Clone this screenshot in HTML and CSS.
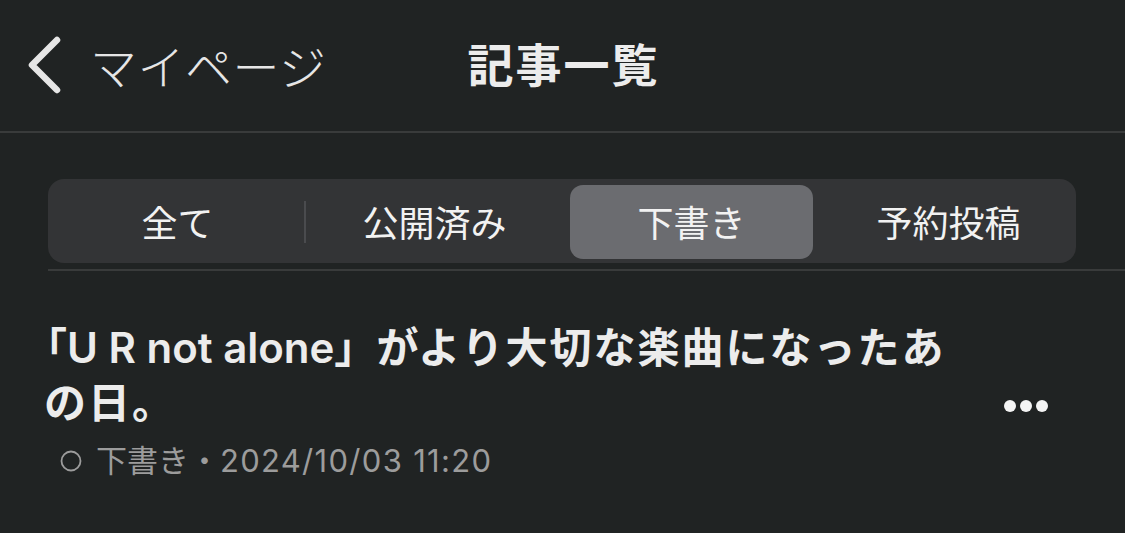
FILE: index.html
```html
<!DOCTYPE html>
<html lang="ja">
<head>
<meta charset="utf-8">
<link rel="stylesheet" href="styles.css">
</head>
<body>
<header class="nav">
  <div class="back">
    <svg class="chev" width="40" height="60" viewBox="0 0 40 60"><path d="M33 5 L8 30 L33 55" fill="none" stroke="#e6e6e6" stroke-width="6.5" stroke-linecap="round" stroke-linejoin="round"/></svg>
    <span class="back-label">マイページ</span>
  </div>
  <h1 class="title">記事一覧</h1>
  <div class="nav-end"></div>
</header>
<div class="seg-wrap">
  <div class="seg">
    <div class="seg-item first"><span class="pill">全て</span></div>
    <div class="seg-item"><span class="pill">公開済み</span></div>
    <div class="seg-item"><span class="pill active">下書き</span></div>
    <div class="seg-item"><span class="pill">予約投稿</span></div>
  </div>
</div>
<div class="rule"></div>
<article class="post">
  <div class="post-body">
    <h2 class="post-title">「U R not alone」<span class="jp">がより大切な楽曲になったあ</span><span class="jp">の日。</span></h2>
    <div class="meta"><svg class="ring" width="22" height="22" viewBox="0 0 22 22"><circle cx="11" cy="11" r="9.5" fill="none" stroke="#9c9c9c" stroke-width="1.8"/></svg><span class="meta-text">下書き・<span class="num">2024/10/03 11:20</span></span></div>
  </div>
  <div class="more"><span></span><span></span><span></span></div>
</article>
</body>
</html>
```
FILE: styles.css
```css
* { box-sizing: border-box; }
html, body { margin: 0; padding: 0; }
body {
  background: #202323;
  color: #ececec;
  font-family: Inter, "Noto Sans CJK JP", sans-serif;
  width: 1125px;
  height: 533px;
  overflow: hidden;
}
.nav {
  height: 133px;
  border-bottom: 2px solid #393b3b;
  display: grid;
  grid-template-columns: 1fr auto 1fr;
  align-items: center;
}
.back { display: flex; align-items: center; gap: 26px; margin-top: -2px; padding-left: 24px; }
.chev { display: block; }
.back-label {
  font-family: "Noto Sans CJK JP", sans-serif;
  font-size: 47px;
  font-weight: 300;
  color: #e6e6e6;
  letter-spacing: 0.5px;
}
.title {
  margin: -8px 0 0 2px;
  font-family: "Noto Sans CJK JP", sans-serif;
  font-size: 46px;
  font-weight: 700;
  color: #ececec;
  letter-spacing: 2px;
}
.seg-wrap { padding: 46px 49px 0 48px; }
.seg {
  height: 84px;
  background: #333436;
  border-radius: 16px;
  display: flex;
}
.seg-item {
  flex: 1;
  display: flex;
  padding: 6px 6px 4px 8px;
  position: relative;
}
.seg-item.first::after {
  content: "";
  position: absolute;
  right: -1px;
  top: 22px;
  width: 2px;
  height: 42px;
  background: #4a4b4e;
}
.pill {
  flex: 1;
  display: flex;
  align-items: center;
  justify-content: center;
  font-family: "Noto Sans CJK JP", sans-serif;
  font-size: 36px;
  color: #f2f2f2;
  border-radius: 13px;
  padding-bottom: 2px;
}
.pill.active { background: #6b6c70; }
.rule { height: 2px; background: #393b3b; margin: 6px 0 0 48px; }
.post {
  display: flex;
  align-items: center;
  padding: 49px 0 0 44px;
}
.post-body { width: 915px; }
.post-title {
  margin: 0;
  font-size: 42px;
  font-weight: 600;
  line-height: 55px;
  color: #ececec;
  text-indent: -19px;
}
.jp { letter-spacing: 2px; }
.meta {
  margin: 11px 0 0 16px;
  display: flex;
  align-items: center;
  gap: 14px;
  color: #9c9c9c;
  line-height: 40px;
}
.ring { display: block; }
.meta-text {
  font-family: Inter, "Noto Sans CJK JP", sans-serif;
  font-size: 31px;
}
.num { letter-spacing: 1.3px; }
.more { display: flex; gap: 4px; margin: 10px 0 0 45px; }
.more span { width: 12px; height: 12px; border-radius: 50%; background: #f4f4f4; }
```
